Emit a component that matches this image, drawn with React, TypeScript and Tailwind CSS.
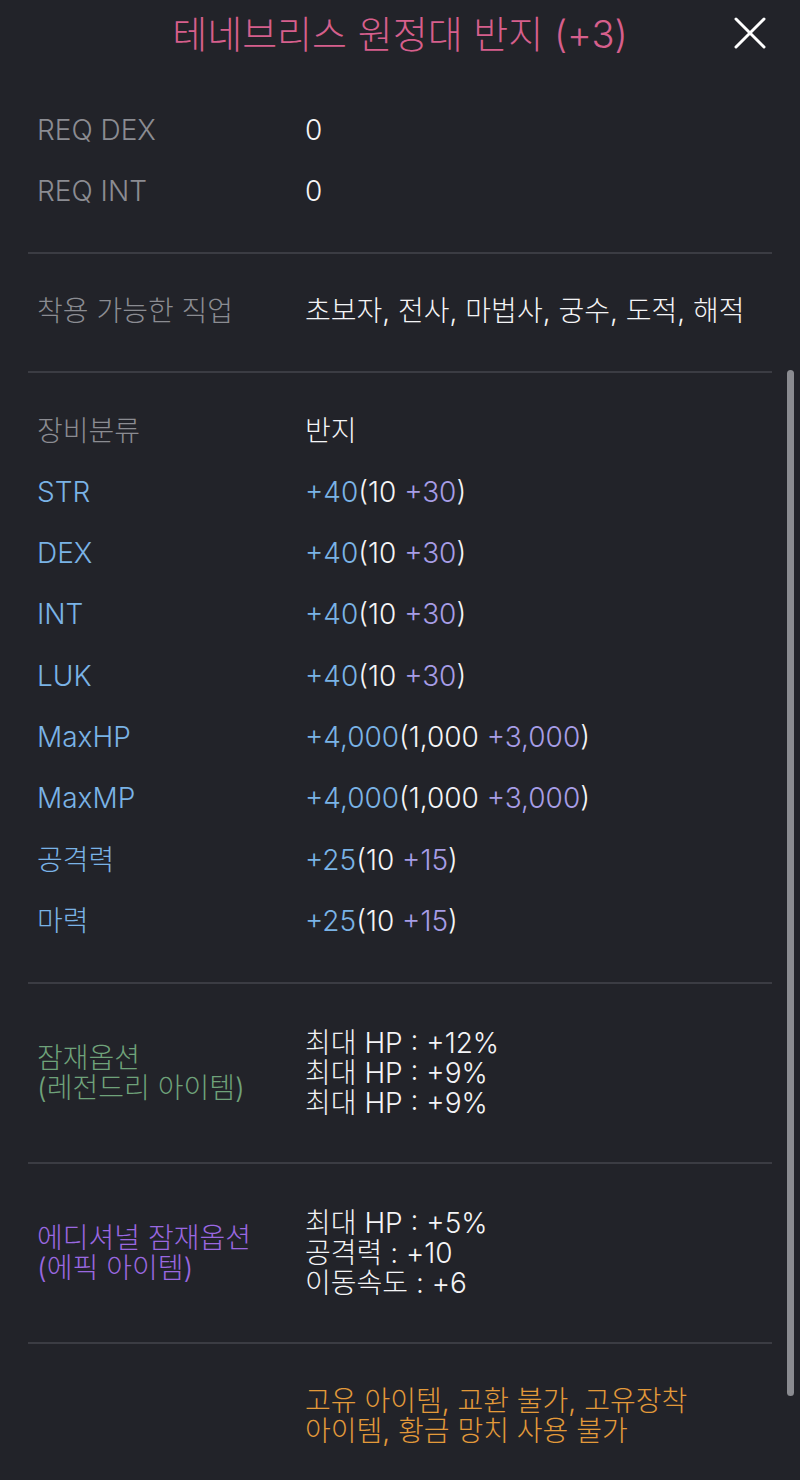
import React from "react";

const FONT = {
  fontFamily:
    'Inter, "Noto Sans CJK KR", "Noto Sans", sans-serif',
};

type Stat = { label: string; total: string; base: string; bonus: string };

const STATS: Stat[] = [
  { label: "STR", total: "+40", base: "10", bonus: "+30" },
  { label: "DEX", total: "+40", base: "10", bonus: "+30" },
  { label: "INT", total: "+40", base: "10", bonus: "+30" },
  { label: "LUK", total: "+40", base: "10", bonus: "+30" },
  { label: "MaxHP", total: "+4,000", base: "1,000", bonus: "+3,000" },
  { label: "MaxMP", total: "+4,000", base: "1,000", bonus: "+3,000" },
  { label: "공격력", total: "+25", base: "10", bonus: "+15" },
  { label: "마력", total: "+25", base: "10", bonus: "+15" },
];

function Row({
  label,
  labelClass = "text-[#8b8c92]",
  children,
}: {
  label: string;
  labelClass?: string;
  children: React.ReactNode;
}) {
  return (
    <div className="flex h-[61.3px] items-center">
      <div className={`w-[277px] shrink-0 pl-[9px] ${labelClass}`}>{label}</div>
      <div className="text-[#f4f4f6]">{children}</div>
    </div>
  );
}

function Divider() {
  return <div className="mx-[28px] h-[2px] bg-[#3b3c43]" />;
}

export default function App() {
  return (
    <div
      className="relative h-[1480px] w-[800px] overflow-hidden bg-[#222329] text-[28px] font-light leading-[30px]"
      style={FONT}
    >
      {/* header */}
      <div className="relative flex h-[68px] items-center justify-center">
        <h1 className="text-[38px] font-light leading-[40px] text-[#d65f8c]">
          테네브리스 원정대 반지 (+3)
        </h1>
        <button className="absolute right-[34px] top-[17px] text-white">
          <svg width="32" height="32" viewBox="0 0 32 32" fill="none">
            <path
              d="M2 2L30 30M30 2L2 30"
              stroke="currentColor"
              strokeWidth="3"
              strokeLinecap="round"
            />
          </svg>
        </button>
      </div>

      <div className="px-[28px] pb-[30px] pt-[31px]">
        <Row label="REQ DEX">0</Row>
        <Row label="REQ INT">0</Row>
      </div>
      <Divider />

      <div className="px-[28px] pb-[29px] pt-[27px]">
        <Row label="착용 가능한 직업">초보자, 전사, 마법사, 궁수, 도적, 해적</Row>
      </div>
      <Divider />

      <div className="px-[28px] pb-[30px] pt-[27px]">
        <Row label="장비분류">반지</Row>
        {STATS.map((s) => (
          <Row key={s.label} label={s.label} labelClass="text-[#7ab3e6]">
            <span className="text-[#7ab3e6]">{s.total}</span>(
            {s.base} <span className="text-[#a79de6]">{s.bonus}</span>)
          </Row>
        ))}
      </div>
      <Divider />

      <div className="flex h-[178px] items-center px-[28px]">
        <div className="w-[277px] shrink-0 pl-[9px] text-[#6fa27a]">
          <div className="h-[30px]">잠재옵션</div>
          <div className="h-[30px]">(레전드리 아이템)</div>
        </div>
        <div className="text-[#f4f4f6]">
          <div className="h-[30px]">최대 HP : +12%</div>
          <div className="h-[30px]">최대 HP : +9%</div>
          <div className="h-[30px]">최대 HP : +9%</div>
        </div>
      </div>
      <Divider />

      <div className="flex h-[178px] items-center px-[28px]">
        <div className="w-[277px] shrink-0 pl-[9px] text-[#9a68e0]">
          <div className="h-[30px]">에디셔널 잠재옵션</div>
          <div className="h-[30px]">(에픽 아이템)</div>
        </div>
        <div className="text-[#f4f4f6]">
          <div className="h-[30px]">최대 HP : +5%</div>
          <div className="h-[30px]">공격력 : +10</div>
          <div className="h-[30px]">이동속도 : +6</div>
        </div>
      </div>
      <Divider />

      <div className="px-[28px] pt-[42px]">
        <div className="ml-[277px] w-[420px] break-keep text-[#e39a3a]">
          고유 아이템, 교환 불가, 고유장착 아이템, 황금 망치 사용 불가
        </div>
      </div>

      {/* scrollbar */}
      <div className="absolute left-[787px] top-[370px] h-[1026px] w-[7px] rounded-full bg-[#8a8b90]" />
    </div>
  );
}
